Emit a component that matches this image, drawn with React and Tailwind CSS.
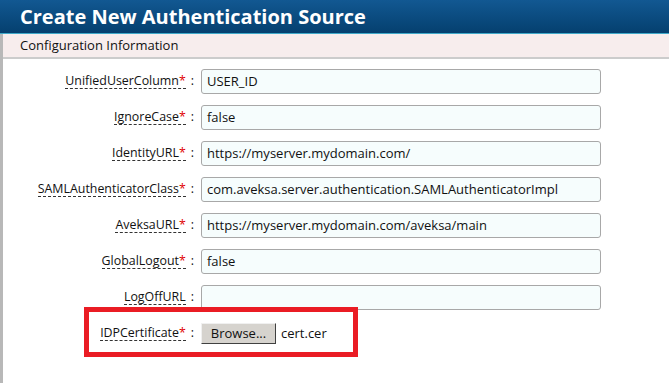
import React from "react";

const fields = [
  { label: "UnifiedUserColumn", required: true, value: "USER_ID" },
  { label: "IgnoreCase", required: true, value: "false" },
  { label: "IdentityURL", required: true, value: "https://myserver.mydomain.com/" },
  {
    label: "SAMLAuthenticatorClass",
    required: true,
    value: "com.aveksa.server.authentication.SAMLAuthenticatorImpl",
  },
  { label: "AveksaURL", required: true, value: "https://myserver.mydomain.com/aveksa/main" },
  { label: "GlobalLogout", required: true, value: "false" },
  { label: "LogOffURL", required: false, value: "" },
];

const Label = ({ text, required }) => (
  <div className="w-[201px] shrink-0 flex justify-end items-center pr-[10px] text-[12.4px]">
    <span className="border-b border-dashed border-[#333] leading-[15px]">
      {text}
      {required && <span className="text-[#e00000]">*</span>}
    </span>
    <span className="ml-[5px]">:</span>
  </div>
);

const App = () => {
  return (
    <div
      className="relative w-[669px] h-[383px] bg-white overflow-hidden text-[13px] text-[#111]"
      style={{ fontFamily: '"Open Sans", "DejaVu Sans", sans-serif' }}
    >
      {/* Title bar */}
      <div className="h-[33px] bg-gradient-to-b from-[#125892] to-[#05406f] flex items-center pl-[20px]">
        <h1 className="text-white font-bold text-[20px] leading-none">
          Create New Authentication Source
        </h1>
      </div>
      <div className="h-px bg-[#3fa9c9]" />

      {/* Body */}
      <div className="border-l-[3px] border-[#b8b8b8] h-[349px]">
        <div className="h-[25px] bg-[#f7eded] border-b-2 border-[#cccccc] flex items-center pl-[17px]">
          Configuration Information
        </div>

        <div className="flex flex-col gap-[11px] pt-[10px]">
          {fields.map((f) => (
            <div key={f.label} className="flex items-center h-[25px]">
              <Label text={f.label} required={f.required} />
              <div className="w-[400px] h-[25px] bg-[#f6fdfd] border border-[#a8a8a8] rounded-[3px] flex items-center pl-[5px] ml-[-3px]">
                {f.value}
              </div>
            </div>
          ))}

          <div className="flex items-center h-[25px]">
            <Label text="IDPCertificate" required />
            <button className="ml-[-3px] w-[75px] h-[21px] bg-[#d6d3ce] border border-t-[#f0f0f0] border-l-[#f0f0f0] border-r-[#404040] border-b-[#404040] text-[13px] leading-none text-[#111]">
              Browse...
            </button>
            <span className="ml-[5px]">cert.cer</span>
          </div>
        </div>
      </div>

      {/* Annotation highlight */}
      <div className="absolute left-[84px] top-[307px] w-[274px] h-[50px] border-[5px] border-[#ea1c24]" />
    </div>
  );
};

export default App;
